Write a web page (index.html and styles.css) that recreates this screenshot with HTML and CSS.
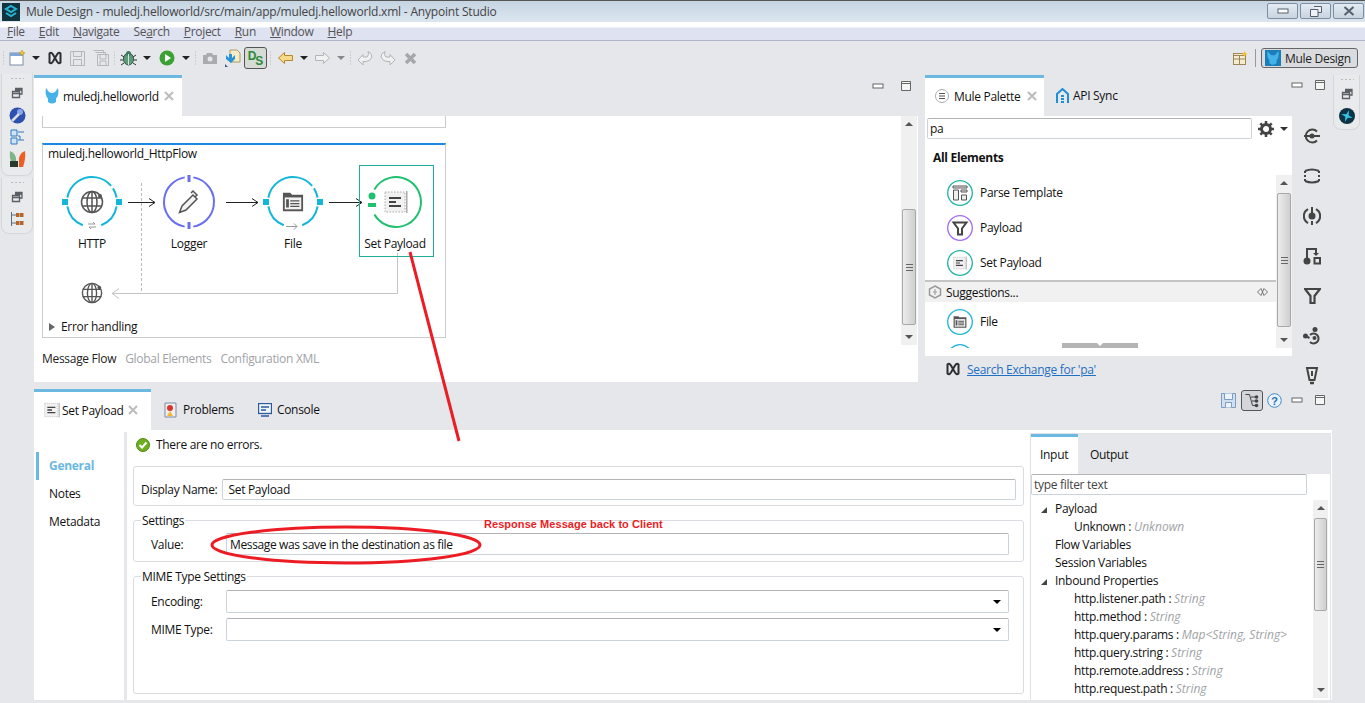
FILE: index.html
```html
<!DOCTYPE html>
<html lang="en">
<head>
  <meta charset="UTF-8">
  <title>Mule Design - Anypoint Studio</title>
  <link rel="stylesheet" href="styles.css">
</head>
<body>
  <svg class="sprite" width="0" height="0">
    <symbol id="mule" viewBox="0 0 16 18"><path d="M2 1L5 5Q8 7 11 5L14 1Q15.500 8 12 11.500L12 15Q8 18 4 15L4 11.500Q.5 8 2 1Z" fill="#45b2ea"/></symbol>
    <symbol id="exch" viewBox="0 0 16 16"><path d="M2.500 3.500C4 2 5 3 6 4.500L10 11.500C11 13 12 14 13.500 12.500V3.500C12 2 11 3 10 4.500L6 11.500C5 13 4 14 2.500 12.500Z" fill="none" stroke="#2b2f33" stroke-width="2"/></symbol>
    <symbol id="restore" viewBox="0 0 12 12"><path d="M4 1.500h7v5.500h-2M1.500 4.500h7v6h-7zM1.500 6.500h7M4 3h7" fill="none" stroke="#5a5f66" stroke-width="1.300"/></symbol>
    <symbol id="minim" viewBox="0 0 12 12"><rect x="1" y="4" width="10" height="4" fill="#fff" stroke="#666"/></symbol>
    <symbol id="maxim" viewBox="0 0 12 12"><path d="M1.500 1.500h9v9h-9zM1.500 3.500h9" fill="#f5f5f5" stroke="#666"/></symbol>
    <symbol id="closex" viewBox="0 0 10 10"><path d="M1 1l8 8M9 1l-8 8" stroke="#bcbcbc" stroke-width="2"/></symbol>
    <symbol id="globe" viewBox="0 0 24 24"><g fill="none" stroke="#555" stroke-width="1.500"><circle cx="12" cy="12" r="10.500"/><ellipse cx="12" cy="12" rx="5" ry="10.500"/><path d="M12 1.500v21M2 8h20M2 16h20"/></g><circle cx="20" cy="6" r="2" fill="#555"/></symbol>
    <symbol id="setpl" viewBox="0 0 24 24"><rect x="1" y="2" width="20" height="20" fill="#f1f1f1" stroke="#aaa" stroke-dasharray="1.500 1.500"/><path d="M5 7h12v2H5zM5 11h7v2H5zM5 15h12v2H5z" fill="#444"/><path d="M22 1h1.500v22H22z" fill="#aaa"/></symbol>
    <symbol id="filei" viewBox="0 0 24 24"><path d="M1 2h8l2 2h12v18H1z" fill="#555"/><rect x="3" y="7" width="18" height="13" fill="#f1f1f1"/><path d="M4.500 9h3v9h-3zM9 10h10v1.500H9zM9 13h10v1.500H9zM9 16h10v1.500H9z" fill="#555"/></symbol>
  </svg>

  <header class="titlebar">
    <svg class="app-logo" width="18" height="18" viewBox="0 0 18 18"><rect width="18" height="18" fill="#11343f"/><path d="M9 3l5 3-5 3-5-3zM4 10l5 3 5-3" fill="none" stroke="#27b6d8" stroke-width="2"/></svg>
    <span class="title-text">Mule Design - muledj.helloworld/src/main/app/muledj.helloworld.xml - Anypoint Studio</span>
    <div class="win-btns">
      <span class="win-btn"><svg width="12" height="8" viewBox="0 0 12 8"><rect x="1" y="2" width="10" height="4" fill="#fff" stroke="#54606e"/></svg></span>
      <span class="win-btn"><svg width="12" height="11" viewBox="0 0 12 11"><path d="M4 .5h7.500v6H8M.5 3.500h7.500v7H.5z" fill="#eef2f6" stroke="#54606e"/></svg></span>
      <span class="win-btn"><svg width="12" height="10" viewBox="0 0 12 10"><path d="M1.500 1l9 8M10.500 1l-9 8" stroke="#54606e" stroke-width="2"/></svg></span>
    </div>
  </header>

  <nav class="menubar">
    <a><u>F</u>ile</a><a><u>E</u>dit</a><a><u>N</u>avigate</a><a>Se<u>a</u>rch</a><a><u>P</u>roject</a><a><u>R</u>un</a><a><u>W</u>indow</a><a><u>H</u>elp</a>
  </nav>

  <div class="toolbar">
    <i class="grip"></i>
    <span class="tb"><svg width="17" height="16" viewBox="0 0 17 16"><rect x="1" y="3" width="13" height="12" fill="#fff" stroke="#7d8ea5"/><path d="M1 3h13v3H1z" fill="#7fa6d6"/><path d="M13 0l1 2 2 1-2 1-1 2-1-2-2-1 2-1z" fill="#f2c230" stroke="#b98d10" stroke-width=".5"/></svg></span>
    <span class="dd"></span>
    <span class="tb"><svg width="16" height="16"><use href="#exch"/></svg></span>
    <span class="tb"><svg width="15" height="15" viewBox="0 0 15 15"><path d="M.5.5h14v14H.5zM3.500.5v5h8v-5M3.500 14.500v-6h8v6" fill="none" stroke="#b5b7ba"/></svg></span>
    <span class="tb"><svg width="16" height="16" viewBox="0 0 16 16"><path d="M.5.5h10v3M2.500 2.500h10v3M4.500 4.500h11v11h-11zM7 5v4h6V5M7 15v-4h6v4" fill="none" stroke="#b5b7ba"/></svg></span>
    <i class="grip"></i>
    <span class="tb"><svg width="17" height="16" viewBox="0 0 17 16"><ellipse cx="8.500" cy="9" rx="5" ry="6" fill="#5f9a7a" stroke="#2e5a45"/><circle cx="8.500" cy="3.500" r="2.500" fill="#3f7a5e"/><path d="M1 5l3 2M16 5l-3 2M0 10h3M17 10h-3M1 15l3-2M16 15l-3-2" stroke="#333"/><path d="M8.500 4v11" stroke="#d5e8dc"/></svg></span>
    <span class="dd"></span>
    <span class="tb tb-run"><svg width="16" height="16" viewBox="0 0 16 16"><circle cx="8" cy="8" r="7.500" fill="#3aa132"/><path d="M6 4l6 4-6 4z" fill="#fff"/></svg></span>
    <span class="dd"></span>
    <i class="grip"></i>
    <span class="tb"><svg width="14" height="11" viewBox="0 0 14 11"><path d="M0 2h3l1-2h5l1 2h4v9H0z" fill="#a9abae"/><circle cx="7" cy="6" r="2.500" fill="#e6e7ea"/></svg></span>
    <span class="tb"><svg width="16" height="18" viewBox="0 0 16 18"><path d="M5 1h7l3 3v9H5z" fill="#f6edc8" stroke="#a89b6a"/><path d="M1 6l3 3V5h3v4l3-3v4l-4 4-5-4z" fill="#2a93d5"/><path d="M0 15l3 3H0z" fill="#3a5d8c"/></svg></span>
    <span class="tb tb-toggle"><span class="ds-d">D</span><span class="ds-s">S</span></span>
    <i class="grip grip-wide"></i>
    <span class="tb"><svg width="15" height="12" viewBox="0 0 15 12"><path d="M.5 6l6-5.500v3h8v5h-8v3z" fill="#f7d98a" stroke="#b8862b"/></svg></span>
    <span class="dd"></span>
    <span class="tb"><svg width="15" height="12" viewBox="0 0 15 12"><path d="M14.500 6l-6-5.500v3h-8v5h8v3z" fill="#f1f1f1" stroke="#b2b4b7"/></svg></span>
    <span class="dd dd-off"></span>
    <i class="grip"></i>
    <span class="tb"><svg width="16" height="15" viewBox="0 0 16 15"><path d="M1 9l5 5v-3.500h3Q13 10.500 15 6 15 2 11 .5 12.500 4 10 6H6V3.500z" fill="#f1f1f1" stroke="#b2b4b7"/></svg></span>
    <span class="tb"><svg width="16" height="15" viewBox="0 0 16 15"><path d="M15 9l-5 5v-3.500H7Q3 10.500 1 6 1 2 5 .5 3.500 4 6 6h4V3.500z" fill="#f1f1f1" stroke="#b2b4b7"/></svg></span>
    <span class="tb"><svg width="13" height="13" viewBox="0 0 13 13"><path d="M2 2l9 9M11 2l-9 9" stroke="#a5a7aa" stroke-width="3.500"/></svg></span>

    <div class="toolbar-right">
      <svg width="15" height="14" viewBox="0 0 15 14"><rect x=".5" y="2.500" width="12" height="11" fill="#f6ecd0" stroke="#9a8656"/><path d="M.5 2.500h12v2H.5zM6.500 4v9M1 8h11" stroke="#9a8656" fill="none"/><path d="M11.500 0l1 2 2 1-2 1-1 2-1-2-2-1 2-1z" fill="#f2c230"/></svg>
      <i class="tb-sep"></i>
      <span class="persp-btn"><svg width="16" height="16" viewBox="0 0 16 16"><rect width="16" height="16" fill="#1a7fb8"/><use href="#mule" x="0" y="0" width="16" height="16"/></svg>Mule Design</span>
    </div>
  </div>

  <div class="workspace">
    <aside class="left-rail">
      <div class="rail-group rail-group-a">
        <span class="rail-dots"></span>
        <svg width="12" height="12"><use href="#restore"/></svg>
        <svg width="17" height="17" viewBox="0 0 17 17"><circle cx="8.500" cy="8.500" r="8" fill="#2d4fb0"/><circle cx="11" cy="5" r="3" fill="#8aa6e6"/><path d="M3 14l7-7" stroke="#ddd" stroke-width="2.500"/></svg>
        <svg width="15" height="16" viewBox="0 0 15 16"><path d="M1 1h6v6H1zM1 9h6v6H1z" fill="#cfe3f8" stroke="#2e78c0"/><path d="M8 3h6M8 7h2v4M8 11h6" stroke="#2e78c0" fill="none"/></svg>
        <svg width="17" height="18" viewBox="0 0 17 18"><path d="M1 1Q6 3 7 8L7 13H3Q0 8 1 1Z" fill="#7fb48a"/><path d="M16 1Q11 3 10 8L10 17H14Q17 8 16 1Z" fill="#ee5e22"/><rect x="1" y="11" width="8" height="6" fill="#2b3a2f"/></svg>
      </div>
      <div class="rail-group rail-group-b">
        <span class="rail-dots"></span>
        <svg width="12" height="12"><use href="#restore"/></svg>
        <svg width="14" height="14" viewBox="0 0 14 14"><path d="M1.500 0v14M1.500 3H6M1.500 11H6" stroke="#5b6d80" fill="none"/><path d="M6 1h3.500v4H6zM10 1h3.500v4H10zM6 9h3.500v4H6zM10 9h3.500v4H10z" fill="#b5652a"/></svg>
      </div>
    </aside>

    <main class="center">
      <div class="top-row">
        <section class="editor-pane">
          <div class="tabs">
            <div class="tab tab-active tab-editor"><svg width="16" height="18"><use href="#mule"/></svg>muledj.helloworld<svg class="tab-x" width="10" height="10"><use href="#closex"/></svg></div>
            <div class="tab-tools tab-tools-editor">
              <svg width="12" height="12"><use href="#minim"/></svg>
              <svg width="12" height="12"><use href="#maxim"/></svg>
            </div>
          </div>
          <div class="editor-body">
            <div class="canvas">
              <div class="cut-box"></div>
              <div class="flow-box">
                <div class="flow-title">muledj.helloworld_HttpFlow</div>
                <svg class="flow-svg" width="404" height="195" viewBox="42 143 404 195">
                  <defs>
                    <marker id="head" markerWidth="8" markerHeight="10" refX="7" refY="5" orient="auto"><path d="M1 1l6 4-6 4" fill="none" stroke="#222"/></marker>
                    <marker id="headg" markerWidth="9" markerHeight="12" refX="8" refY="6" orient="auto"><path d="M1 1l7 5-7 5" fill="none" stroke="#c4c4c4"/></marker>
                  </defs>
                  <path d="M141.500 183v109" stroke="#bbb" stroke-dasharray="3 2" fill="none"/>
                  <path d="M397.500 253v40.500H112" stroke="#c4c4c4" fill="none" marker-end="url(#headg)"/>
                  <path d="M128 202.500h27" stroke="#222" fill="none" marker-end="url(#head)"/>
                  <path d="M226 202.500h32" stroke="#222" fill="none" marker-end="url(#head)"/>
                  <path d="M329 202.500h33" stroke="#222" fill="none" marker-end="url(#head)"/>

                  <circle cx="92" cy="202" r="25" transform="rotate(10 92 202)" class="ring ring-blue" pathLength="360" stroke-dasharray="58 44 58 20 130 7 23 20"/>
                  <rect x="62" y="199" width="6" height="6" class="port-blue"/><rect x="116" y="199" width="6" height="6" class="port-blue"/>
                  <use href="#globe" x="80" y="190" width="24" height="24"/>
                  <path d="M88 224h7l-2-2M96 227h-7l2 2" stroke="#999" fill="none"/>

                  <circle cx="189" cy="202" r="25" transform="rotate(-80 189 202)" class="ring ring-purple" pathLength="360" stroke-dasharray="160 20 160 20"/>
                  <rect x="187.500" y="175" width="3" height="7" fill="#6a6ff0"/><rect x="187.500" y="222" width="3" height="7" fill="#6a6ff0"/>
                  <path d="M182 206l-2.500 6.500 6.500-2.500 11-11-4-4zM191 193l2-2 4 4-2 2" fill="#f4f4f4" stroke="#555" stroke-width="1.500"/>

                  <circle cx="293" cy="202" r="25" transform="rotate(10 293 202)" class="ring ring-blue" pathLength="360" stroke-dasharray="58 44 58 20 130 7 23 20"/>
                  <rect x="263" y="199" width="6" height="6" class="port-blue"/><rect x="317" y="199" width="6" height="6" class="port-blue"/>
                  <use href="#filei" x="281" y="191" width="24" height="22"/>
                  <path d="M286 226.500h11l-3-3M297 226.500l-3 3" stroke="#999" fill="none"/>

                  <rect x="359.500" y="165.500" width="74" height="91" fill="none" stroke="#1fae9c"/>
                  <circle cx="396" cy="202" r="25" transform="rotate(-150 396 202)" class="ring ring-green" pathLength="360" stroke-dasharray="300 60"/>
                  <circle cx="372" cy="196" r="3.500" fill="#1fc06f"/><rect x="368" y="203" width="8" height="4" fill="#1fc06f"/>
                  <use href="#setpl" x="384" y="190" width="24" height="24"/>

                  <use href="#globe" x="81" y="282" width="22" height="22"/>
                </svg>
                <span class="node-label lbl-http">HTTP</span>
                <span class="node-label lbl-logger">Logger</span>
                <span class="node-label lbl-file">File</span>
                <span class="node-label lbl-setpl">Set Payload</span>
                <div class="error-row"><i class="tri-right"></i>Error handling</div>
              </div>
            </div>
            <div class="vscroll vscroll-editor">
              <span class="sb-up"></span>
              <div class="sb-track"><div class="sb-thumb"><i></i></div></div>
              <span class="sb-down"></span>
            </div>
          </div>
          <div class="editor-tabs"><b>Message Flow</b><span>Global Elements</span><span>Configuration XML</span></div>
        </section>

        <section class="palette-pane">
          <div class="tabs">
            <div class="tab tab-active tab-palette">
              <svg width="14" height="14" viewBox="0 0 14 14"><circle cx="7" cy="7" r="6.500" fill="#fff" stroke="#aaa"/><path d="M4 4.500h6M4 7h6M4 9.500h6" stroke="#555"/></svg>Mule Palette<svg class="tab-x" width="10" height="10"><use href="#closex"/></svg>
            </div>
            <div class="tab tab-api">
              <svg width="13" height="16" viewBox="0 0 13 16"><path d="M1 15V6L6.500 1 12 6v9" fill="none" stroke="#1e8fd5" stroke-width="2"/><path d="M6.500 7v8" stroke="#1e8fd5" stroke-width="3" stroke-dasharray="2 1"/></svg>API Sync
            </div>
          </div>
          <div class="palette-body">
            <div class="palette-search">
              <div class="input palette-input">pa</div>
              <svg class="gear" width="16" height="16" viewBox="0 0 16 16"><circle cx="8" cy="8" r="4.500" fill="none" stroke="#444" stroke-width="3"/><path d="M8 0v3M8 13v3M0 8h3M13 8h3M2.300 2.300l2.100 2.100M11.600 11.600l2.100 2.100M13.700 2.300l-2.100 2.100M4.400 11.600l-2.100 2.100" stroke="#444" stroke-width="2.500"/></svg>
              <i class="tri-down"></i>
            </div>
            <div class="palette-head">All Elements</div>
            <div class="palette-list">
              <div class="list-main">
                <div class="pal-item"><svg width="26" height="26" viewBox="0 0 26 26"><circle cx="13" cy="13" r="12.300" fill="#fff" stroke="#1fb5a0" stroke-width="1.300"/><path d="M6 6h14v2H6zM6.500 10h5v10h-5zM14 10h6v2h-6zM14.500 15h5v5h-5z" fill="#eee" stroke="#555"/></svg>Parse Template</div>
                <div class="pal-item"><svg width="26" height="26" viewBox="0 0 26 26"><circle cx="13" cy="13" r="12.300" fill="#fff" stroke="#a06cf5" stroke-width="1.300"/><path d="M6.500 7.500h13L15 13.500v6h-4v-6z" fill="none" stroke="#444" stroke-width="2"/></svg>Payload</div>
                <div class="pal-item"><svg width="26" height="26" viewBox="0 0 26 26"><circle cx="13" cy="13" r="12.300" fill="#fff" stroke="#1fb5a0" stroke-width="1.300"/><use href="#setpl" x="6" y="6" width="14" height="14"/></svg>Set Payload</div>
                <div class="pal-sugg">
                  <svg width="14" height="14" viewBox="0 0 14 14"><path d="M7 1l5.500 3v6L7 13l-5.500-3V4z" fill="none" stroke="#9a9a9a" stroke-width="1.500"/><path d="M5 7h4M7 4v6" stroke="#9a9a9a"/></svg>Suggestions...
                  <svg class="sugg-arrows" width="11" height="8" viewBox="0 0 11 8"><path d="M4 .5L.5 4 4 7.500M7 .5L10.500 4 7 7.500M4 .5l3 7M7 .5l-3 7" fill="none" stroke="#777"/></svg>
                </div>
                <div class="pal-item"><svg width="26" height="26" viewBox="0 0 26 26"><circle cx="13" cy="13" r="12.300" fill="#fff" stroke="#1fb5d8" stroke-width="1.300"/><use href="#filei" x="6" y="6" width="14" height="14"/></svg>File</div>
                <div class="pal-item"><svg width="26" height="26" viewBox="0 0 26 26"><circle cx="13" cy="13" r="12.300" fill="#fff" stroke="#1fb5d8" stroke-width="1.300"/></svg></div>
                <div class="pal-more"><i></i></div>
              </div>
              <div class="vscroll vscroll-palette">
                <span class="sb-up"></span>
                <div class="sb-track"><div class="sb-thumb"><i></i></div></div>
                <span class="sb-down"></span>
              </div>
            </div>
          </div>
          <div class="exchange-row"><svg width="16" height="16"><use href="#exch"/></svg><a>Search Exchange for 'pa'</a></div>
        </section>

        <div class="pal-icons">
          <div class="pal-tools">
            <svg width="12" height="12"><use href="#minim"/></svg>
            <svg width="12" height="12"><use href="#maxim"/></svg>
          </div>
          <svg width="18" height="16" viewBox="0 0 18 16"><path d="M14 3.500A6.500 6.500 0 1 0 14 12.500" fill="none" stroke="#444" stroke-width="2"/><path d="M1 8h16" stroke="#444" stroke-width="2"/><circle cx="9" cy="8" r="2.500" fill="#444"/></svg>
          <svg width="18" height="18" viewBox="0 0 18 18"><path d="M2 4Q9 1 16 4M2 14Q9 17 16 14" fill="none" stroke="#444" stroke-width="2"/><path d="M2 4v10M16 4v10" fill="none" stroke="#444" stroke-width="2" stroke-dasharray="2 2"/></svg>
          <svg width="18" height="20" viewBox="0 0 18 20"><path d="M5 3a8 8 0 0 0 0 14M13 3a8 8 0 0 1 0 14" fill="none" stroke="#444" stroke-width="2"/><circle cx="9" cy="10" r="3.500" fill="#444"/><path d="M9 1v6M9 15v4" stroke="#444" stroke-width="2"/></svg>
          <svg width="18" height="18" viewBox="0 0 18 18"><circle cx="4" cy="14" r="3.500" fill="#444"/><rect x="11.500" y="11" width="5.500" height="5.500" fill="none" stroke="#444" stroke-width="2"/><path d="M4 11V2h9v5" fill="none" stroke="#444" stroke-width="2"/><path d="M10 6h6l-3 3z" fill="#444"/></svg>
          <svg width="17" height="16" viewBox="0 0 17 16"><path d="M1 1h15l-5.500 7v7h-4V8z" fill="none" stroke="#444" stroke-width="2.200"/></svg>
          <svg width="18" height="18" viewBox="0 0 18 18"><circle cx="12" cy="2.500" r="2.500" fill="#444"/><circle cx="2.500" cy="9" r="2.500" fill="#444"/><path d="M2.500 9l4 2M7 8a5 5 0 1 1 0 7" fill="none" stroke="#444" stroke-width="2"/><circle cx="11.500" cy="11" r="2" fill="#444"/></svg>
          <svg width="14" height="18" viewBox="0 0 14 18"><path d="M2 1h10l-2.500 12h-5z" fill="none" stroke="#444" stroke-width="2"/><path d="M7 4v5" stroke="#444" stroke-width="2"/><path d="M5 16h4" stroke="#444" stroke-width="2.500"/></svg>
        </div>
      </div>

      <section class="bottom-pane">
        <div class="tabs">
          <div class="tab tab-active tab-setpl"><svg width="16" height="16"><use href="#setpl"/></svg>Set Payload<svg class="tab-x" width="10" height="10"><use href="#closex"/></svg></div>
          <div class="tab tab-problems"><svg width="14" height="16" viewBox="0 0 14 16"><path d="M1 1h11v14H1z" fill="#eee" stroke="#7b8ba5"/><circle cx="6" cy="6" r="3" fill="#d9342a"/><path d="M3 14l3-5 3 5z" fill="#f2b632"/></svg>Problems</div>
          <div class="tab tab-console"><svg width="14" height="14" viewBox="0 0 14 14"><rect x=".5" y=".5" width="13" height="10" fill="#eef3fa" stroke="#2c5aa0" stroke-width="1.300"/><path d="M3 4h8M3 7h5M3 13h8" stroke="#2c5aa0" stroke-width="1.300"/></svg>Console</div>
          <div class="tab-tools tab-tools-bottom">
            <svg width="15" height="15" viewBox="0 0 15 15"><path d="M.5.5h14v14H.5z" fill="#cfe0f2" stroke="#7f9cc0"/><path d="M3.500.5v6h8v-6M4.500 14.500v-5h6v5" fill="#eef3f8" stroke="#7f9cc0"/></svg>
            <span class="tree-toggle"><svg width="14" height="15" viewBox="0 0 14 15"><path d="M.5 1.500h4l3 11h3M6 4h4M7 8h3" fill="none" stroke="#444"/><circle cx="11.500" cy="4" r="1.800" fill="#444"/><circle cx="11.500" cy="8" r="1.800" fill="#444"/><circle cx="11.500" cy="12.500" r="1.800" fill="#444"/></svg></span>
            <svg width="15" height="15" viewBox="0 0 15 15"><circle cx="7.500" cy="7.500" r="6.800" fill="#eaf3fb" stroke="#3f8ccc"/><text x="7.500" y="11.500" class="help-q">?</text></svg>
            <svg class="tool-min" width="12" height="12"><use href="#minim"/></svg>
            <svg class="tool-max" width="12" height="12"><use href="#maxim"/></svg>
          </div>
        </div>
        <div class="props">
          <nav class="props-nav">
            <a class="nav-active">General</a>
            <a>Notes</a>
            <a>Metadata</a>
          </nav>
          <div class="props-form">
            <div class="status"><svg width="14" height="14" viewBox="0 0 14 14"><circle cx="7" cy="7" r="6.500" fill="#6fae1f" stroke="#4f8a12"/><path d="M3.500 7l2.500 2.500L10.500 4.500" fill="none" stroke="#fff" stroke-width="2"/></svg>There are no errors.</div>
            <div class="group group-name">
              <label class="lbl-name">Display Name:</label>
              <div class="input name-input">Set Payload</div>
            </div>
            <div class="group group-settings">
              <span class="legend">Settings</span>
              <label class="lbl-val">Value:</label>
              <div class="input value-input">Message was save in the destination as file</div>
            </div>
            <div class="group group-mime">
              <span class="legend">MIME Type Settings</span>
              <div class="mime-row"><label class="lbl-val">Encoding:</label><div class="input select-input"><i class="tri-down tri-black"></i></div></div>
              <div class="mime-row"><label class="lbl-val">MIME Type:</label><div class="input select-input"><i class="tri-down tri-black"></i></div></div>
            </div>
          </div>
          <aside class="data-panel">
            <div class="data-tabs"><span class="data-tab-active">Input</span><span class="data-tab">Output</span></div>
            <div class="filter-row"><div class="input filter-input">type filter text</div></div>
            <div class="tree-wrap">
              <ul class="tree">
                <li class="lvl1"><i class="tri-open"></i>Payload</li>
                <li class="lvl2">Unknown : <em>Unknown</em></li>
                <li class="lvl1">Flow Variables</li>
                <li class="lvl1">Session Variables</li>
                <li class="lvl1"><i class="tri-open"></i>Inbound Properties</li>
                <li class="lvl2">http.listener.path : <em>String</em></li>
                <li class="lvl2">http.method : <em>String</em></li>
                <li class="lvl2">http.query.params : <em>Map&lt;String, String&gt;</em></li>
                <li class="lvl2">http.query.string : <em>String</em></li>
                <li class="lvl2">http.remote.address : <em>String</em></li>
                <li class="lvl2">http.request.path : <em>String</em></li>
              </ul>
              <div class="vscroll vscroll-tree">
                <span class="sb-up"></span>
                <div class="sb-track"><div class="sb-thumb"><i></i></div></div>
                <span class="sb-down"></span>
              </div>
            </div>
          </aside>
        </div>
      </section>
    </main>

    <aside class="right-rail">
      <div class="rail-group rail-group-c">
        <span class="rail-dots"></span>
        <svg width="12" height="12"><use href="#restore"/></svg>
        <svg width="16" height="16" viewBox="0 0 16 16"><circle cx="8" cy="8" r="8" fill="#0d3346"/><path d="M8 2l1.300 4.700L14 8l-4.700 1.300L8 14 6.700 9.300 2 8l4.700-1.300z" fill="#35c3e6" transform="rotate(20 8 8)"/></svg>
      </div>
    </aside>
  </div>

  <!-- red annotations drawn over the screenshot -->
  <svg class="annot" width="1365" height="703" viewBox="0 0 1365 703">
    <path d="M410 252L459 441" stroke="#ed1c24" stroke-width="3" fill="none"/>
    <ellipse cx="346" cy="545" rx="134" ry="18" fill="none" stroke="#ed1c24" stroke-width="3"/>
  </svg>
  <span class="annot-text">Response Message back to Client</span>
</body>
</html>
```

FILE: styles.css
```css
:root {
  --bg: #e6e7ea;
  --blue: #6bb8e0;
  --line: #d9dce0;
  --muted: #a0a3a6;
}

* {
  box-sizing: border-box;
}

html, body {
  margin: 0;
  height: 703px;
  overflow: hidden;
}

body {
  position: relative;
  width: 1365px;
  background-color: var(--bg);
  font-family: "Open Sans", "Liberation Sans", sans-serif;
  font-size: 12px;
  letter-spacing: -0.3px;
  color: #111;
}

.sprite {
  position: absolute;
}

svg {
  display: block;
  flex: none;
}

/* title bar */
.titlebar {
  height: 22px;
  display: flex;
  align-items: center;
  padding-left: 2px;
  border-top: 1px solid #555;
  background: linear-gradient(#c6d4e2, #dbe6f0);
}

.title-text {
  margin-left: 6px;
  color: #444;
  letter-spacing: -0.2px;
}

.win-btns {
  margin-left: auto;
  margin-right: 1px;
  margin-top: -1px;
  display: flex;
  gap: 2px;
}

.win-btn {
  width: 31px;
  height: 16px;
  display: flex;
  align-items: center;
  justify-content: center;
  border: 1px solid #7f8ea0;
  border-radius: 2px;
  background: linear-gradient(#e3ebf3, #c8d4e0);
}

/* menu */
.menubar {
  height: 19px;
  display: flex;
  gap: 14px;
  padding: 3px 0 0 7px;
  border-bottom: 1px solid #aeb6c6;
  background: linear-gradient(#fff, #fff 5px, #dfe3f1 6px);
  color: #555;
  line-height: 14px;
}

/* toolbar */
.toolbar {
  height: 30px;
  display: flex;
  align-items: center;
  padding: 4px 7px 0 1px;
}

.tb {
  width: 23px;
  height: 22px;
  display: flex;
  align-items: center;
  justify-content: center;
}

.tb-run {
  width: 25px;
}

.tb-toggle {
  border: 1px solid #555;
  border-radius: 3px;
  background: #d6dbd5;
  color: #2d8a3a;
  font: bold 12px/12px "Liberation Sans", sans-serif;
  letter-spacing: 0;
}

.ds-d {
  margin-top: -5px;
}

.ds-s {
  margin-top: 5px;
  margin-left: -1px;
}

.dd {
  width: 14px;
  display: flex;
  justify-content: center;
}

.dd::after {
  content: "";
  border: 4px solid transparent;
  border-top: 4px solid #222;
  border-bottom: 0;
}

.dd-off::after {
  border-top-color: #888;
}

.grip {
  width: 5px;
  height: 16px;
  background: radial-gradient(circle, #b5b5b5 1px, transparent 1px) center / 5px 3px repeat-y;
}

.grip-wide {
  width: 7px;
}

.toolbar-right {
  margin-left: auto;
  display: flex;
  align-items: center;
}

.tb-sep {
  width: 1px;
  height: 18px;
  margin: 0 5px 0 7px;
  background: #999;
}

.persp-btn {
  width: 97px;
  height: 20px;
  display: flex;
  align-items: center;
  gap: 4px;
  padding-left: 3px;
  border: 1px solid #666;
  border-radius: 3px;
  background: #d9dbde;
  color: #222;
}

/* layout */
.workspace {
  height: 632px;
  display: flex;
}

.left-rail {
  width: 34px;
  padding: 0 1px;
  display: flex;
  flex-direction: column;
  gap: 2px;
}

.right-rail {
  width: 33px;
  padding: 4px 0 0 1px;
}

.rail-group {
  width: 32px;
  display: grid;
  grid-template-rows: 8px;
  grid-auto-rows: 22px;
  justify-items: center;
  align-items: center;
  border: 1px solid #d5d6d9;
  border-top: 0;
  border-radius: 0 0 8px 8px;
  background: #e9eaec;
}

.rail-group-a {
  height: 102px;
  margin-top: 3px;
}

.rail-group-b {
  height: 56px;
}

.rail-group-c {
  width: 27px;
  height: 55px;
}

.rail-dots {
  width: 14px;
  height: 3px;
  background: radial-gradient(circle, #bbb 1px, transparent 1px) 0 0 / 4px 3px repeat-x;
}

.center {
  width: 1298px;
  padding-top: 4px;
}

.top-row {
  height: 307px;
  display: flex;
}

.tabs {
  height: 41px;
  display: flex;
  position: relative;
}

.tab {
  display: flex;
  align-items: center;
  gap: 3px;
}

.tab-active {
  background: #fff;
  border-top: 3px solid var(--blue);
  padding-bottom: 2px;
}

.tab-x {
  margin-left: 2px;
}

.tab-tools {
  margin-left: auto;
  margin-top: -19px;
  display: flex;
  align-items: center;
}

.tab-tools-editor {
  gap: 16px;
  margin-right: 6px;
}

/* editor */
.editor-pane {
  width: 884px;
  margin-right: 7px;
  background: #fff;
}

.editor-pane .tabs {
  background: var(--bg);
}

.tab-editor {
  width: 148px;
  padding-left: 10px;
}

.editor-body {
  height: 229px;
  display: flex;
}

.canvas {
  flex: 1;
  padding-left: 8px;
}

.cut-box {
  width: 404px;
  height: 12px;
  border: 1px solid #ccc;
  border-top: 0;
}

.flow-box {
  position: relative;
  width: 404px;
  height: 195px;
  margin-top: 15px;
  border: 1px solid #ccc;
  border-top: 2px solid #1e88e5;
}

.flow-title {
  padding: 1px 0 0 5px;
  line-height: 15px;
}

.flow-svg {
  position: absolute;
  left: -1px;
  top: -2px;
}

.ring {
  fill: none;
  stroke-width: 2;
}

.ring-blue {
  stroke: #12b6d8;
}

.ring-purple {
  stroke: #6a6ff0;
}

.ring-green {
  stroke: #1fc06f;
}

.port-blue {
  fill: #12b6d8;
}

.node-label {
  position: absolute;
  top: 90px;
  width: 80px;
  text-align: center;
}

.lbl-http {
  left: 9px;
}

.lbl-logger {
  left: 106px;
}

.lbl-file {
  left: 210px;
}

.lbl-setpl {
  left: 312px;
}

.error-row {
  position: absolute;
  left: 6px;
  bottom: 2px;
  display: flex;
  align-items: center;
  gap: 6px;
}

.tri-right {
  border: 4px solid transparent;
  border-left: 6px solid #666;
  border-right: 0;
}

.editor-tabs {
  height: 37px;
  display: flex;
  gap: 9px;
  padding: 5px 0 0 8px;
  color: var(--muted);
}

.editor-tabs b {
  font-weight: normal;
  color: #222;
}

/* scrollbars */
.vscroll {
  width: 16px;
  display: flex;
  flex-direction: column;
  align-items: center;
  background: #f0f0f0;
}

.vscroll-editor {
  margin-right: 1px;
}

.sb-up, .sb-down {
  height: 16px;
  flex: none;
  display: flex;
  align-items: center;
}

.sb-up::after {
  content: "";
  border: 4px solid transparent;
  border-bottom: 4px solid #555;
  border-top: 0;
}

.sb-down::after {
  content: "";
  border: 4px solid transparent;
  border-top: 4px solid #555;
  border-bottom: 0;
}

.sb-track {
  flex: 1;
  width: 100%;
  position: relative;
}

.sb-thumb {
  position: absolute;
  left: 1px;
  right: 1px;
  display: flex;
  align-items: center;
  justify-content: center;
  border: 1px solid #a8a8a8;
  border-radius: 2px;
  background: linear-gradient(90deg, #ececec, #cfcfcf);
}

.sb-thumb i {
  width: 7px;
  height: 7px;
  border-top: 1px solid #666;
  border-bottom: 1px solid #666;
  background: linear-gradient(#666, #666) center / 100% 1px no-repeat;
}

.vscroll-editor .sb-thumb {
  top: 77px;
  height: 116px;
}

.vscroll-palette .sb-thumb {
  top: 2px;
  height: 134px;
}

.vscroll-tree .sb-thumb {
  top: 2px;
  height: 93px;
}

/* palette */
.palette-pane {
  width: 367px;
}

.tab-palette {
  width: 119px;
  padding-left: 10px;
  gap: 5px;
}

.tab-api {
  margin-left: 12px;
  gap: 4px;
}

.palette-body {
  height: 240px;
  padding-top: 2px;
  background: #fff;
  overflow: hidden;
}

.input {
  background: #fff;
  border: 1px solid #cdd3da;
  border-top-color: #b4b4b8;
  border-radius: 2px;
  padding-left: 5px;
}

.palette-search {
  display: flex;
  align-items: center;
  padding-left: 2px;
  height: 21px;
}

.palette-input {
  width: 325px;
  height: 21px;
  line-height: 20px;
  padding-left: 2px;
}

.gear {
  margin-left: 6px;
}

.tri-down {
  margin-left: 6px;
  border: 4px solid transparent;
  border-top: 4px solid #333;
  border-bottom: 0;
}

.palette-head {
  height: 36px;
  padding: 11px 0 0 8px;
  font-weight: bold;
  line-height: 16px;
}

.palette-list {
  height: 173px;
  display: flex;
  overflow: hidden;
}

.list-main {
  position: relative;
  width: 351px;
  height: 173px;
  overflow: hidden;
}

.pal-item {
  height: 35px;
  display: flex;
  align-items: center;
  gap: 7px;
  padding-left: 22px;
}

.pal-sugg {
  height: 22px;
  margin-bottom: 2px;
  display: flex;
  align-items: center;
  gap: 4px;
  padding: 0 8px 0 3px;
  border-top: 2px solid #c4c4c4;
  background: #f1f1f1;
}

.sugg-arrows {
  margin-left: auto;
}

.pal-more {
  position: absolute;
  left: 137px;
  bottom: 0;
  width: 76px;
  height: 5px;
  display: flex;
  justify-content: center;
  background: #b4b4b4;
}

.pal-more i {
  border: 3px solid transparent;
  border-top: 3px solid #fff;
}

.vscroll-palette {
  width: 16px;
}

.exchange-row {
  height: 26px;
  display: flex;
  align-items: center;
  gap: 6px;
  padding-left: 20px;
}

.exchange-row a {
  color: #1f6fc2;
  text-decoration: underline;
}

.pal-icons {
  width: 40px;
  display: grid;
  grid-template-rows: 41px;
  grid-auto-rows: 40px;
  justify-items: center;
  align-items: center;
  align-content: start;
}

.pal-tools {
  justify-self: start;
  align-self: start;
  padding-top: 4px;
  margin-left: -1px;
  display: flex;
  gap: 11px;
}

/* properties */
.bottom-pane {
  height: 311px;
  margin-top: 7px;
}

.tab-setpl {
  width: 117px;
  padding-left: 10px;
  gap: 2px;
}

.tab-problems {
  margin-left: 13px;
  gap: 5px;
}

.tab-console {
  margin-left: 24px;
  gap: 5px;
}

.tree-toggle {
  width: 22px;
  height: 21px;
  margin: 0 4px 0 5px;
  display: flex;
  align-items: center;
  justify-content: center;
  border: 1px solid #555;
  border-radius: 3px;
  background: #d4d6d9;
}

.tool-min {
  margin-left: 9px;
}

.tool-max {
  margin-left: 11px;
  margin-right: 6px;
}

.props {
  height: 270px;
  display: flex;
  background: #fff;
}

.props-nav {
  width: 90px;
  margin-top: 22px;
  display: flex;
  flex-direction: column;
  flex: none;
}

.props-nav a {
  height: 28px;
  padding-left: 15px;
  line-height: 27px;
}

.props-nav .nav-active {
  margin-left: 2px;
  padding-left: 10px;
  border-left: 3px solid var(--blue);
  color: var(--blue);
  font-weight: bold;
}

.props-form {
  width: 906px;
  flex: none;
  margin-top: 2px;
  padding-left: 6px;
  border-left: 3px solid var(--bg);
}

.status {
  height: 34px;
  display: flex;
  align-items: center;
  gap: 6px;
  padding: 0 0 9px 3px;
}

.group {
  width: 891px;
  position: relative;
  border: 1px solid var(--line);
  border-radius: 3px;
}

.group-name {
  height: 40px;
  display: flex;
  align-items: center;
  padding: 6px 7px 0 7px;
  gap: 5px;
}

.group-settings {
  height: 42px;
  margin-top: 14px;
  display: flex;
  align-items: flex-start;
  line-height: 24px;
  padding: 12px 14px 0 17px;
}

.group-mime {
  height: 118px;
  margin-top: 14px;
  padding: 13px 14px 0 17px;
}

.legend {
  position: absolute;
  left: 7px;
  top: -8px;
  padding: 0 1px;
  background: #fff;
  line-height: 15px;
}

.lbl-name {
  flex: none;
}

.lbl-val {
  width: 75px;
  flex: none;
}

.name-input {
  flex: 1;
  height: 21px;
  line-height: 19px;
}

.value-input {
  flex: 1;
  height: 22px;
  line-height: 22px;
  padding-left: 3px;
  letter-spacing: -0.37px;
}

.mime-row {
  height: 28px;
  display: flex;
  align-items: flex-start;
  line-height: 23px;
}

.select-input {
  flex: 1;
  height: 23px;
  display: flex;
  align-items: center;
  justify-content: flex-end;
  padding-right: 7px;
}

.tri-black {
  border-top-color: #000;
}

/* input / output tree */
.data-panel {
  width: 301px;
  flex: none;
  margin-top: 3px;
  border: 1px solid #e0e3e6;
  border-bottom: 0;
}

.data-tabs {
  height: 40px;
  display: flex;
  background: var(--bg);
}

.data-tab-active {
  width: 47px;
  padding: 5px 0 0 9px;
  line-height: 26px;
  background: #fff;
  border-top: 3px solid var(--blue);
}

.data-tab {
  margin-left: 12px;
  padding-top: 8px;
  line-height: 26px;
}

.filter-row {
  height: 26px;
}

.filter-input {
  width: 276px;
  height: 21px;
  line-height: 19px;
  padding-left: 2px;
  color: #444;
}

.tree-wrap {
  height: 198px;
  display: flex;
}

.tree {
  width: 282px;
  margin: 0;
  padding: 0;
  list-style: none;
  overflow: hidden;
}

.tree li {
  height: 18px;
  line-height: 18px;
  position: relative;
  white-space: nowrap;
}

.lvl1 {
  padding-left: 24px;
}

.lvl2 {
  padding-left: 43px;
}

.tree em {
  color: var(--muted);
  letter-spacing: 0;
}

.tri-open {
  position: absolute;
  left: 10px;
  top: 7px;
  border-style: solid;
  border-width: 0 0 6px 6px;
  border-color: transparent transparent #444 transparent;
}

.vscroll-tree {
  width: 15px;
}

.help-q {
  font: bold 11px "Liberation Sans", sans-serif;
  fill: #2a6fb0;
  text-anchor: middle;
}

/* annotations */
.annot {
  position: absolute;
  left: 0;
  top: 0;
  pointer-events: none;
}

.annot-text {
  position: absolute;
  left: 484px;
  top: 517px;
  color: #ed1c24;
  font: bold 11px/14px "Liberation Sans", sans-serif;
  letter-spacing: 0.05px;
}
```
